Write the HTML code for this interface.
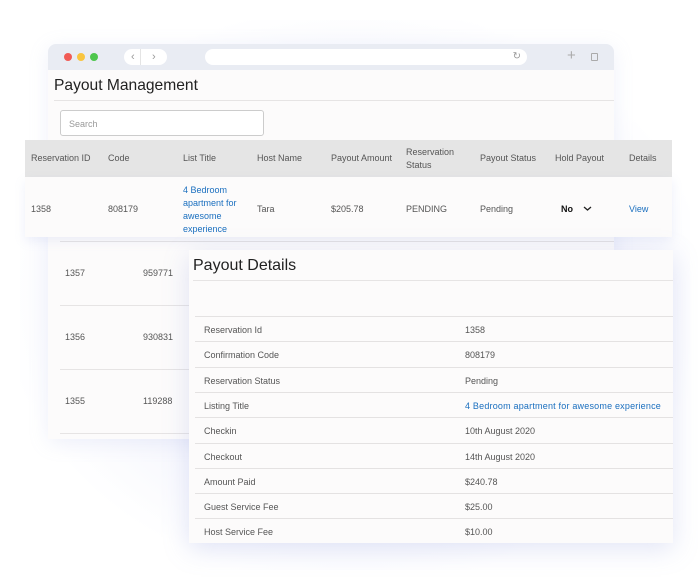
<!DOCTYPE html>
<html><head><meta charset="utf-8"><style>
*{margin:0;padding:0;box-sizing:border-box}
body{width:698px;height:577px;overflow:hidden;background:#fff;font-family:"Liberation Sans",sans-serif;position:relative}
.glow{position:absolute;left:20px;top:20px;width:670px;height:550px;background:radial-gradient(ellipse at 50% 50%,#eef0fb 0%,#f5f6fd 50%,#fff 75%)}
.win{position:absolute;left:48px;top:44px;width:566px;height:395px;background:#fcfbfb;border-radius:8px 8px 0 0;box-shadow:0 4px 20px rgba(150,160,220,.15);overflow:hidden}
.bar{height:26px;background:#e9ecf3;position:relative}
.dot{position:absolute;top:9px;width:8px;height:8px;border-radius:50%}
.nav{position:absolute;left:76px;top:5px;width:43px;height:16px;background:#fff;border-radius:8px;font-size:11px;color:#999;line-height:16px}
.url{position:absolute;left:157px;top:5px;width:322px;height:16px;background:#fff;border-radius:8px}
.t1{position:absolute;left:6px;top:33px;font-size:15.6px;color:#222}
.hr{position:absolute;height:1px;background:#e6e4e4}
.search{position:absolute;left:12px;top:66px;width:204px;height:26px;border:1px solid #ccc;border-radius:3px;background:#fff;font-size:9px;color:#999;padding:8px 8px}
.thead{position:absolute;left:25px;top:140px;width:647px;height:37px;background:#e5e5e5;font-size:9px;color:#555}
.row1{position:absolute;left:25px;top:177px;width:647px;height:60px;background:#fcfbfb;font-size:9px;color:#555;box-shadow:0 4px 10px rgba(150,160,220,.15)}
.c{position:absolute}
.blue{color:#1a6fbf}
.lr{position:absolute;font-size:9px;color:#555}
.det{position:absolute;left:189px;top:250px;width:484px;height:293px;background:#fcfbfb;box-shadow:0 6px 24px rgba(140,150,220,.25)}
.t2{position:absolute;left:4px;top:7px;font-size:16px;color:#222}
.dr{position:absolute;left:6px;width:478px;height:25.3px;border-top:1px solid #e4e2e2;font-size:9px;color:#555}
.dr span{position:absolute;top:8px}
</style></head><body>
<div class="glow"></div>
<div class="win">
 <div class="bar">
  <div class="dot" style="left:16px;background:#f15b55"></div>
  <div class="dot" style="left:29px;background:#f9c53f"></div>
  <div class="dot" style="left:42px;background:#4dc64c"></div>
  <div class="nav"><span style="position:absolute;left:7px">‹</span><span style="position:absolute;left:16px;top:0;width:1px;height:16px;background:#e4e4e4"></span><span style="position:absolute;left:28px">›</span></div>
  <div class="url"><span style="position:absolute;right:6px;top:0;font-size:10px;color:#999;line-height:16px">↻</span></div>
  <span style="position:absolute;left:519px;top:4px;font-size:15px;color:#aaa;line-height:16px">+</span>
  <span style="position:absolute;left:543px;top:9px;width:7px;height:8px;border:1px solid #aaa;border-radius:1px"></span>
 </div>
 <div class="t1">Payout Management</div>
 <div class="hr" style="left:6px;top:56px;width:560px"></div>
 <div class="search">Search</div>
 <div class="hr" style="left:12px;top:197px;width:554px"></div>
 <div class="lr" style="left:17px;top:224px">1357</div><div class="lr" style="left:95px;top:224px">959771</div>
 <div class="hr" style="left:12px;top:261px;width:554px"></div>
 <div class="lr" style="left:17px;top:288px">1356</div><div class="lr" style="left:95px;top:288px">930831</div>
 <div class="hr" style="left:12px;top:325px;width:554px"></div>
 <div class="lr" style="left:17px;top:352px">1355</div><div class="lr" style="left:95px;top:352px">119288</div>
 <div class="hr" style="left:12px;top:389px;width:554px"></div>
</div>
<div class="thead">
 <span class="c" style="left:6px;top:13px">Reservation ID</span>
 <span class="c" style="left:83px;top:13px">Code</span>
 <span class="c" style="left:158px;top:13px">List Title</span>
 <span class="c" style="left:232px;top:13px">Host Name</span>
 <span class="c" style="left:306px;top:13px">Payout Amount</span>
 <span class="c" style="left:381px;top:6px;line-height:13px">Reservation<br>Status</span>
 <span class="c" style="left:455px;top:13px">Payout Status</span>
 <span class="c" style="left:530px;top:13px">Hold Payout</span>
 <span class="c" style="left:604px;top:13px">Details</span>
</div>
<div class="row1">
 <span class="c" style="left:6px;top:27px">1358</span>
 <span class="c" style="left:83px;top:27px">808179</span>
 <span class="c blue" style="left:158px;top:7px;line-height:13px">4 Bedroom<br>apartment for<br>awesome<br>experience</span>
 <span class="c" style="left:232px;top:27px">Tara</span>
 <span class="c" style="left:306px;top:27px">$205.78</span>
 <span class="c" style="left:381px;top:27px">PENDING</span>
 <span class="c" style="left:455px;top:27px">Pending</span>
 <span class="c" style="left:536px;top:27px;color:#111;font-weight:bold">No</span>
 <svg class="c" style="left:558px;top:28px" width="9" height="7"><path d="M1 2 L4.5 5 L8 2" stroke="#222" stroke-width="1.3" fill="none"/></svg>
 <span class="c blue" style="left:604px;top:27px">View</span>
</div>
<div class="det">
 <div class="t2">Payout Details</div>
 <div class="hr" style="left:4px;top:30px;width:480px"></div>
 <div class="dr" style="top:66px"><span style="left:9px">Reservation Id</span><span style="left:270px">1358</span></div>
 <div class="dr" style="top:91.3px"><span style="left:9px">Confirmation Code</span><span style="left:270px">808179</span></div>
 <div class="dr" style="top:116.6px"><span style="left:9px">Reservation Status</span><span style="left:270px">Pending</span></div>
 <div class="dr" style="top:141.9px"><span style="left:9px">Listing Title</span><span style="left:270px;letter-spacing:0.2px" class="blue">4 Bedroom apartment for awesome experience</span></div>
 <div class="dr" style="top:167.2px"><span style="left:9px">Checkin</span><span style="left:270px">10th August 2020</span></div>
 <div class="dr" style="top:192.5px"><span style="left:9px">Checkout</span><span style="left:270px">14th August 2020</span></div>
 <div class="dr" style="top:217.8px"><span style="left:9px">Amount Paid</span><span style="left:270px">$240.78</span></div>
 <div class="dr" style="top:243.1px"><span style="left:9px">Guest Service Fee</span><span style="left:270px">$25.00</span></div>
 <div class="dr" style="top:268.4px"><span style="left:9px">Host Service Fee</span><span style="left:270px">$10.00</span></div>
</div>
</body></html>
